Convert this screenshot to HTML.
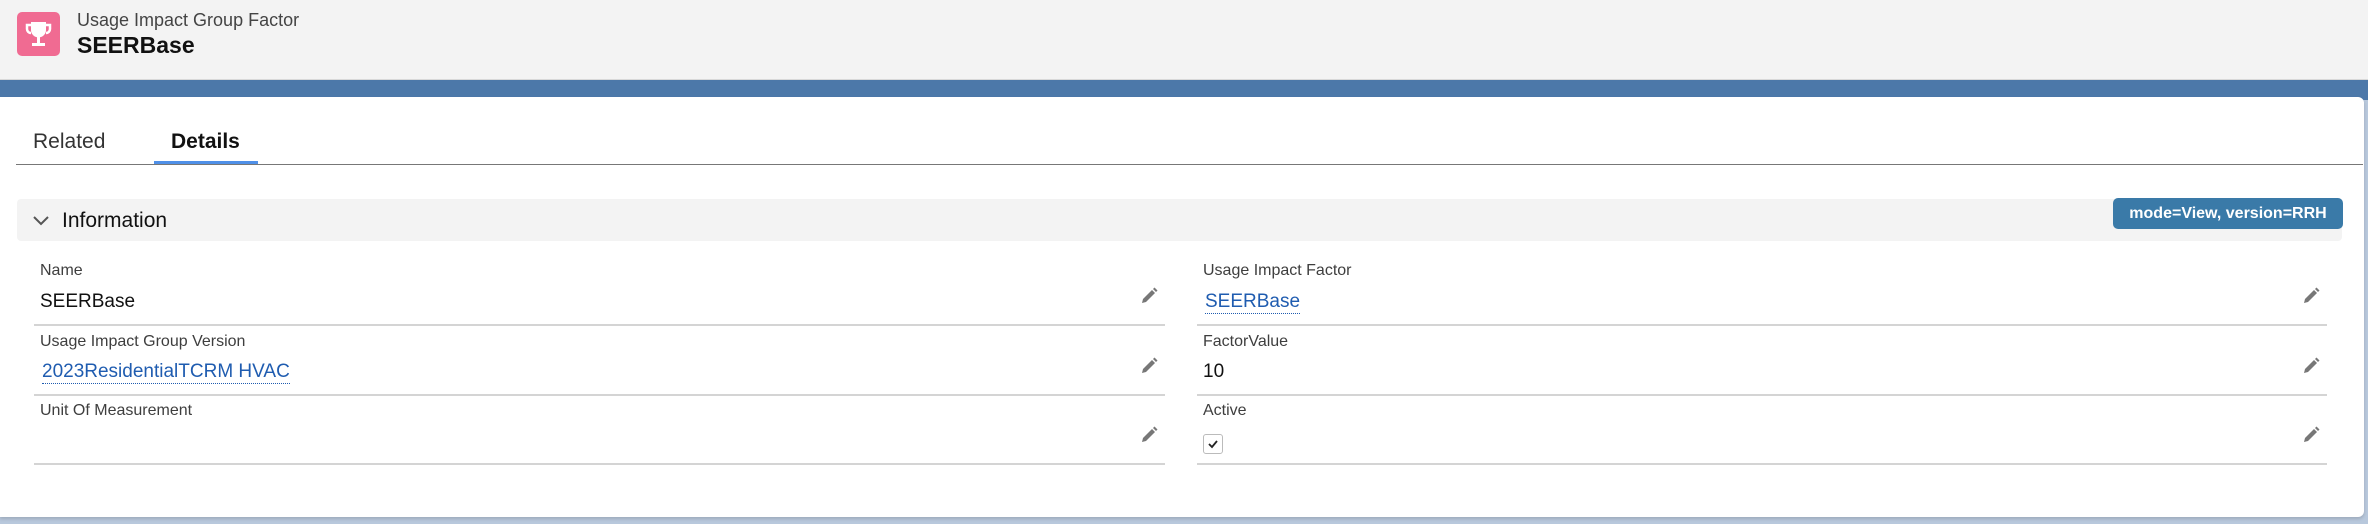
<!DOCTYPE html>
<html><head><meta charset="utf-8"><style>
*{margin:0;padding:0;box-sizing:border-box}
body{width:2368px;height:524px;overflow:hidden;background:#b8c8dc;font-family:"Liberation Sans",Arial,sans-serif;position:relative}
.hdr{position:absolute;left:0;top:0;width:2368px;height:80px;background:#f3f3f3;border-bottom:1px solid #d8d8d8}
.band{position:absolute;left:0;top:80px;width:2368px;height:20px;background:#4c78a9}
.icon{position:absolute;left:17px;top:12px;width:43px;height:44px;background:#f06b92;border-radius:5px}
.sub{position:absolute;left:77px;top:10px;font-size:18px;color:#444}
.ttl{position:absolute;left:77px;top:32px;font-size:23px;font-weight:bold;color:#111}
.card{position:absolute;left:0;top:97px;width:2364px;height:420px;background:#fff;border-radius:0 6px 6px 0;box-shadow:0 2px 3px rgba(0,0,0,.15)}
.t{position:absolute;font-size:21px;color:#333}
.abs{position:absolute}
.lbl{position:absolute;font-size:16px;color:#3e3e3e}
.val{position:absolute;font-size:19px;color:#111}
.lnk{position:absolute;font-size:19px;color:#1f5cb0;border-bottom:1px dotted #1f5cb0;line-height:22px}
.hr{position:absolute;height:2px;background:#d4d4d4}
</style></head><body>
<div class="hdr"></div>
<div class="icon"><svg width="43" height="44" viewBox="0 0 43 44"><path d="M14 10h15v8a7.5 7.5 0 0 1-15 0z" fill="#fff"/><path d="M14 13h-4v4a4 4 0 0 0 4 4M29 13h4v4a4 4 0 0 1-4 4" stroke="#fff" stroke-width="2.5" fill="none"/><rect x="20" y="25" width="3" height="6" fill="#fff"/><rect x="15" y="31" width="13" height="3" fill="#fff"/></svg></div>
<div class="sub">Usage Impact Group Factor</div>
<div class="ttl">SEERBase</div>
<div class="band"></div>
<div class="card">
 <div class="t" style="left:33px;top:33px">Related</div>
 <div class="t" style="left:171px;top:33px;font-weight:bold;color:#111">Details</div>
 <div class="abs" style="left:16px;top:67px;width:2347px;height:1px;background:#777"></div>
 <div class="abs" style="left:154px;top:64px;width:104px;height:3px;background:#4f90e8"></div>
 <div class="abs" style="left:17px;top:102px;width:2325px;height:42px;background:#f3f3f3;border-radius:4px"></div>
 <svg class="abs" style="left:33px;top:118px" width="16" height="12" viewBox="0 0 16 12"><path d="M1 2l7 7 7-7" stroke="#555" stroke-width="2" fill="none"/></svg>
 <div class="abs" style="left:62px;top:112px;font-size:21px;color:#111">Information</div>
 <div class="abs" style="left:2113px;top:101px;width:230px;height:31px;background:#3a7aa8;border-radius:5px;color:#fff;font-weight:bold;font-size:16px;line-height:31px;text-align:center">mode=View, version=RRH</div>

 <div class="lbl" style="left:40px;top:165px">Name</div>
 <div class="val" style="left:40px;top:194px">SEERBase</div>
 <div class="hr" style="left:34px;top:227px;width:1131px"></div>
 <div class="lbl" style="left:40px;top:236px">Usage Impact Group Version</div>
 <div class="lnk" style="left:42px;top:264px">2023ResidentialTCRM HVAC</div>
 <div class="hr" style="left:34px;top:297px;width:1131px"></div>
 <div class="lbl" style="left:40px;top:305px">Unit Of Measurement</div>
 <div class="hr" style="left:34px;top:366px;width:1131px"></div>

 <div class="lbl" style="left:1203px;top:165px">Usage Impact Factor</div>
 <div class="lnk" style="left:1205px;top:194px">SEERBase</div>
 <div class="hr" style="left:1197px;top:227px;width:1130px"></div>
 <div class="lbl" style="left:1203px;top:236px">FactorValue</div>
 <div class="val" style="left:1203px;top:264px">10</div>
 <div class="hr" style="left:1197px;top:297px;width:1130px"></div>
 <div class="lbl" style="left:1203px;top:305px">Active</div>
 <div class="abs" style="left:1203px;top:337px;width:20px;height:20px;border:1px solid #bbb;border-radius:3px"><svg width="18" height="18" viewBox="0 0 18 18"><path d="M5 9l3 3 5-6" stroke="#222" stroke-width="1.8" fill="none"/></svg></div>
 <div class="hr" style="left:1197px;top:366px;width:1130px"></div>
</div>
<svg style="position:absolute;left:0;top:0" width="2368" height="524">
 <defs><g id="p"><path d="M2 16l1-4 9-9 3 3-9 9z" fill="#777"/><path d="M13 2l1.5-1.5 3 3L16 5z" fill="#777"/></g></defs>
 <use href="#p" x="1140" y="287"/><use href="#p" x="1140" y="357"/><use href="#p" x="1140" y="426"/>
 <use href="#p" x="2302" y="287"/><use href="#p" x="2302" y="357"/><use href="#p" x="2302" y="426"/>
</svg>
</body></html>
